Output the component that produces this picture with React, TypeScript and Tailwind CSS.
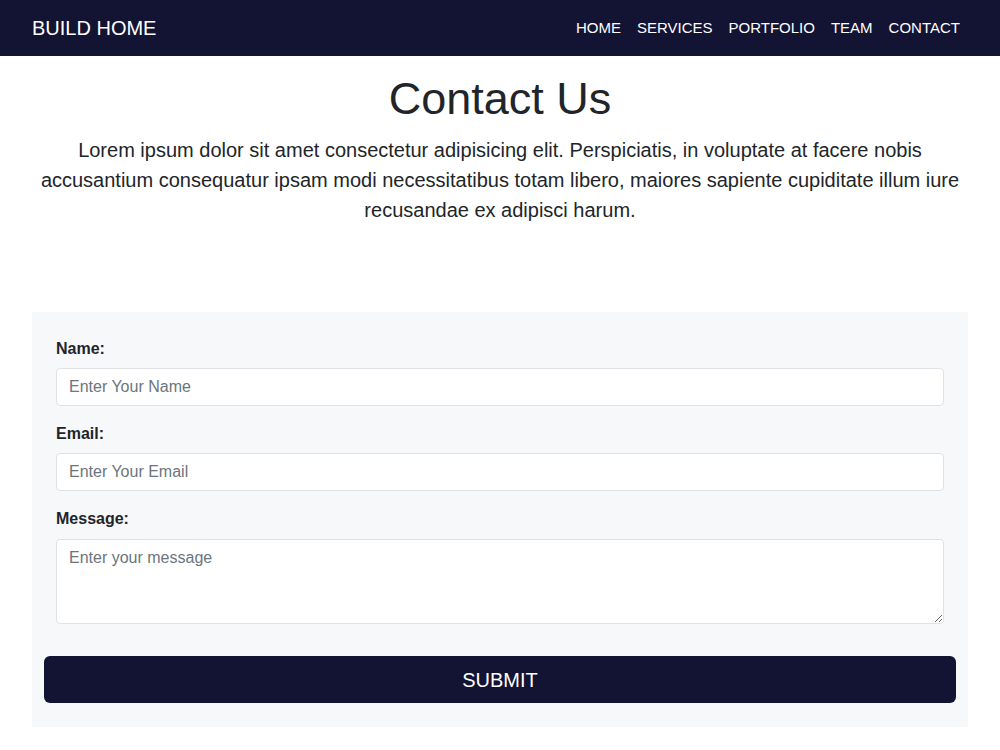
export default function App() {
  return (
    <div className="min-h-screen bg-white font-['Liberation_Sans',Arial,sans-serif] text-[#212529]">
      <nav className="flex h-14 items-center justify-between bg-[#131333] pl-8 pr-10 text-white">
        <a href="#" className="text-[20px]">
          BUILD HOME
        </a>
        <ul className="flex items-center gap-4 text-[15px]">
          <li>HOME</li>
          <li>SERVICES</li>
          <li>PORTFOLIO</li>
          <li>TEAM</li>
          <li>CONTACT</li>
        </ul>
      </nav>

      <section className="px-10 pt-4 text-center">
        <h1 className="text-[45px] leading-[53px]">Contact Us</h1>
        <p className="mt-[10px] text-[20px] leading-[30px]">
          Lorem ipsum dolor sit amet consectetur adipisicing elit. Perspiciatis, in voluptate at
          facere nobis accusantium consequatur ipsam modi necessitatibus totam libero, maiores
          sapiente cupiditate illum iure recusandae ex adipisci harum.
        </p>
      </section>

      <form className="mx-8 mt-[87px] bg-[#f7f8fa] px-3 pt-6 pb-6">
        <div className="px-3">
          <label className="block pt-px text-[16px] font-bold leading-6">Name:</label>
          <input
            type="text"
            placeholder="Enter Your Name"
            className="mt-[7px] block h-[38px] w-full rounded-[4px] border border-[#dee2e6] bg-white px-3 text-[16px] placeholder:text-[#6c757d] focus:outline-none"
          />
          <label className="mt-4 block text-[16px] font-bold leading-6">Email:</label>
          <input
            type="email"
            placeholder="Enter Your Email"
            className="mt-[7px] block h-[38px] w-full rounded-[4px] border border-[#dee2e6] bg-white px-3 text-[16px] placeholder:text-[#6c757d] focus:outline-none"
          />
          <label className="mt-4 block text-[16px] font-bold leading-6">Message:</label>
          <textarea
            placeholder="Enter your message"
            className="mt-2 block h-[85px] w-full rounded-[4px] border border-[#dee2e6] bg-white px-3 py-[6px] text-[16px] leading-6 placeholder:text-[#6c757d] focus:outline-none"
          />
        </div>
        <button
          type="submit"
          className="mt-8 block h-[47px] w-full rounded-[6px] bg-[#131333] text-[20px] text-white"
        >
          SUBMIT
        </button>
      </form>
    </div>
  );
}
